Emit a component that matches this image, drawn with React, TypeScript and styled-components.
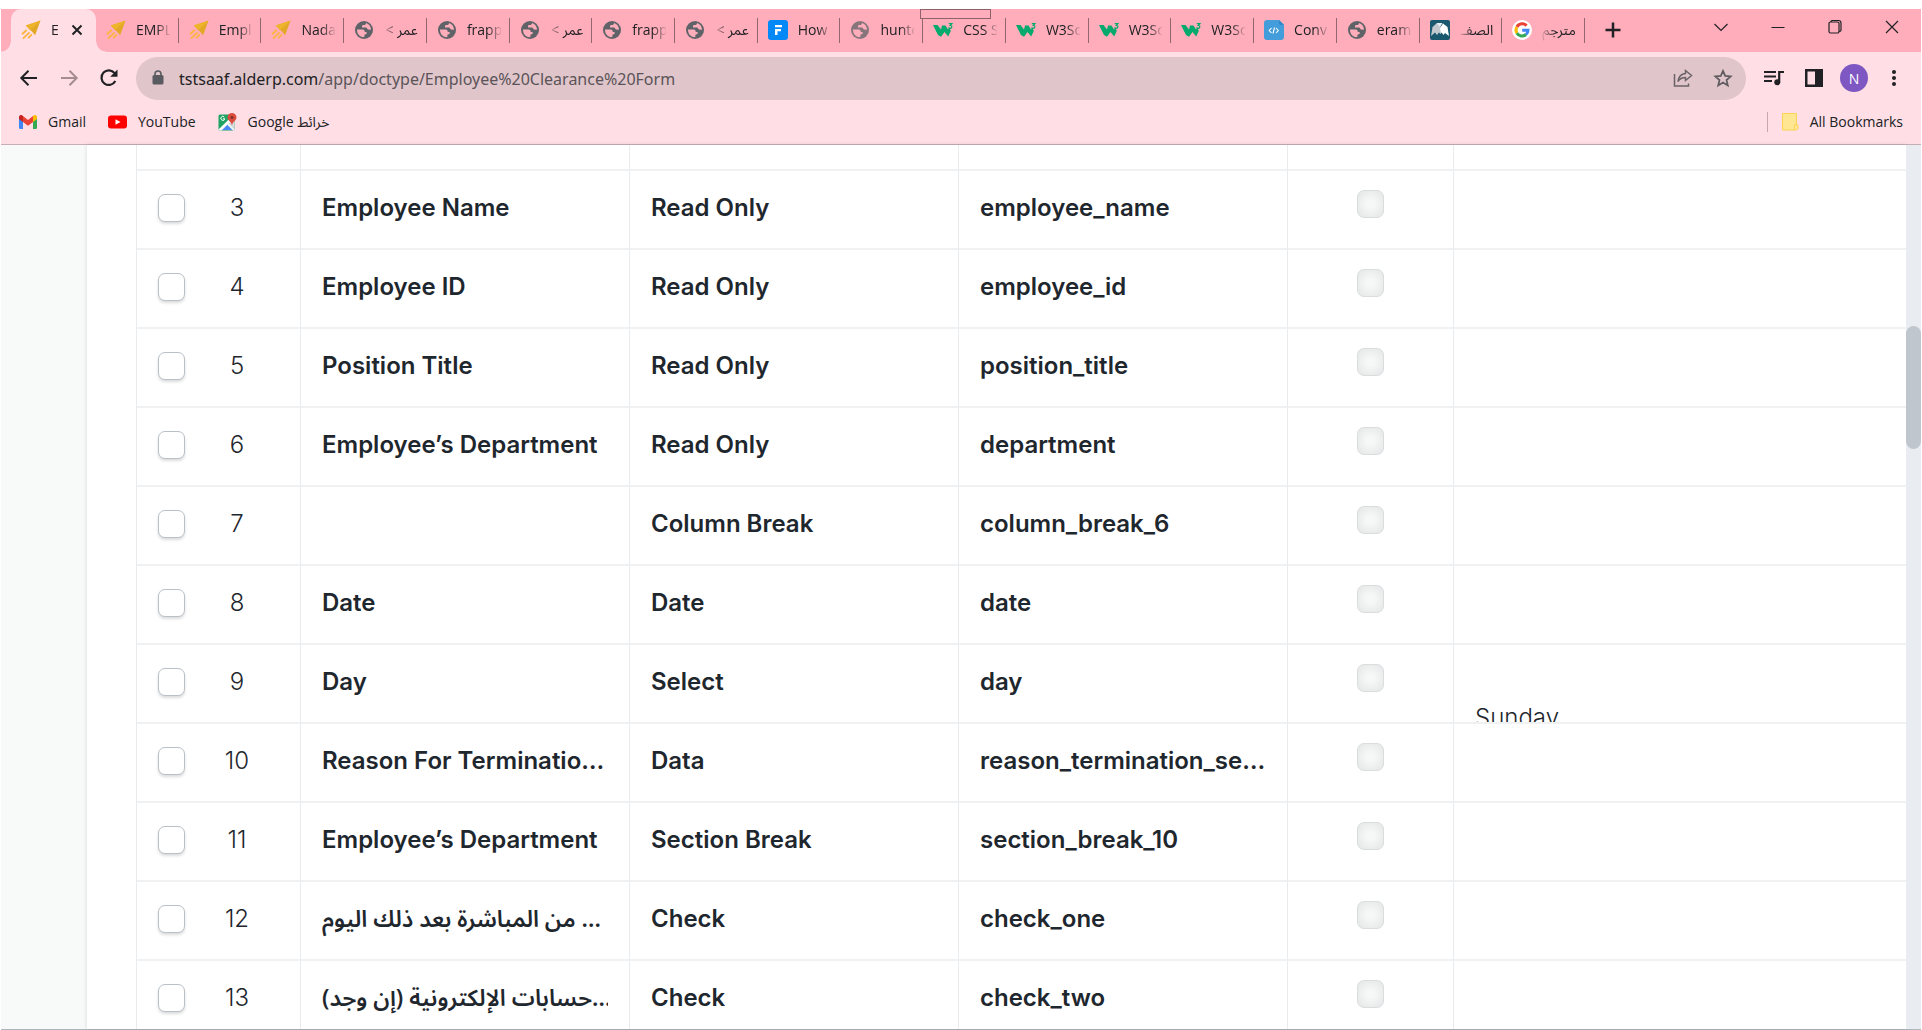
import React from "react";
import styled, { createGlobalStyle, css } from "styled-components";

const GlobalStyle = createGlobalStyle`
  *, *::before, *::after { box-sizing: border-box; }
  html, body { margin: 0; background: #fff; }
  button { border: 0; padding: 0; background: none; color: inherit; font: inherit; }
  svg { display: block; flex: none; }
`;

const uiFont = `"Open Sans", "Noto Sans", "Noto Sans Arabic", "DejaVu Sans", sans-serif`;
const pink = "#ffadbb";
const blush = "#ffdfe5";

/* ---------- window ---------- */

const Window = styled.div`
  display: flex;
  flex-direction: column;
  height: 100vh;
  padding: 9px 1px 0;
  overflow: hidden;
  font-family: ${uiFont};
  color: #202124;
`;

/* ---------- tab strip ---------- */

const TabStrip = styled.header`
  display: flex;
  flex: none;
  height: 43px;
  padding-left: 10px;
  background: ${pink};
`;

const Tabs = styled.nav`
  display: flex;
  flex: 1;
  min-width: 0;
`;

const TabBox = styled.div<{ $active?: boolean }>`
  position: relative;
  display: flex;
  align-items: center;
  padding: 0 9px 2px 10px;
  min-width: 0;
  flex: 1 1 0;
  &::after {
    content: "";
    position: absolute;
    right: 0;
    top: 9px;
    width: 1px;
    height: 25px;
    background: #94666f;
  }
  ${(p) =>
    p.$active &&
    css`
      flex: none;
      width: 85px;
      border-radius: 10px 10px 0 0;
      background: ${blush};
      &::before,
      &::after {
        content: "";
        position: absolute;
        top: auto;
        bottom: 0;
        width: 10px;
        height: 10px;
      }
      &::before {
        left: -10px;
        background: radial-gradient(circle at 0 0, ${pink} 9px, ${blush} 10px);
      }
      &::after {
        right: -10px;
        background: radial-gradient(circle at 100% 0, ${pink} 9px, ${blush} 10px);
      }
    `}
`;

const TabButton = styled.button`
  display: flex;
  align-items: center;
  gap: 10px;
  flex: 1;
  min-width: 0;
  height: 100%;
`;

const TabTitle = styled.span<{ $rtl?: boolean }>`
  flex: 1;
  min-width: 0;
  overflow: hidden;
  white-space: nowrap;
  font-size: 14px;
  line-height: 24px;
  text-align: start;
  mask-image: linear-gradient(
    ${(p) => (p.$rtl ? "to left" : "to right")},
    #000 60%,
    rgba(0, 0, 0, 0.1) 100%
  );
`;

const HoverOutline = styled.span`
  position: absolute;
  top: 0;
  left: -3px;
  z-index: 1;
  width: 71px;
  height: 10px;
  border: 1px solid #8f616b;
`;

const StripActions = styled.div`
  display: flex;
  flex: none;
  width: 336px;
`;

const IconButton = styled.button<{ $w: number }>`
  display: flex;
  align-items: center;
  justify-content: center;
  flex: none;
  width: ${(p) => p.$w}px;
  height: 100%;
`;

const NewTab = styled(IconButton)`
  padding-bottom: 2px;
`;

const WindowControls = styled.div`
  display: flex;
  height: 36px;
  margin-left: auto;
  padding-right: 1px;
`;

/* ---------- toolbar ---------- */

const Toolbar = styled.div`
  display: flex;
  flex: none;
  align-items: center;
  height: 52px;
  padding: 0 7px 0 8px;
  background: ${blush};
`;

const ToolButton = styled(IconButton)`
  height: 40px;
`;

const Omnibox = styled.form`
  display: flex;
  flex: 1;
  align-items: center;
  height: 43px;
  margin-left: 7px;
  padding: 0 3px 0 16px;
  gap: 15px;
  border-radius: 22px;
  background: #e0c5ca;
  color: #5a5458;
`;

const Address = styled.div`
  flex: 1;
  padding-top: 1px;
  font-family: "Noto Sans", sans-serif;
  font-size: 16px;
  line-height: 24px;
  white-space: nowrap;
  b {
    font-weight: 400;
    color: #202124;
  }
`;

const PillActions = styled.div`
  display: flex;
`;

const Extras = styled.div`
  display: flex;
  align-items: center;
  margin-left: 8px;
`;

const Avatar = styled.span`
  display: flex;
  align-items: center;
  justify-content: center;
  width: 28px;
  height: 28px;
  border-radius: 50%;
  background: #7e57c2;
  color: #fff;
  font-size: 14px;
`;

/* ---------- bookmarks ---------- */

const Bookmarks = styled.nav`
  display: flex;
  flex: none;
  align-items: center;
  gap: 22px;
  height: 41px;
  padding: 0 18px 5px;
  border-bottom: 1px solid #c7adb4;
  background: ${blush};
`;

const Bookmark = styled.a<{ $end?: boolean }>`
  display: flex;
  align-items: center;
  gap: 11px;
  color: #202124;
  font-size: 14px;
  line-height: 20px;
  text-decoration: none;
  white-space: nowrap;
  ${(p) =>
    p.$end &&
    css`
      margin-left: auto;
      padding-left: 14px;
      border-left: 1px solid #c7a6ad;
    `}
`;

/* ---------- page ---------- */

const Page = styled.main`
  display: flex;
  flex: 1;
  min-height: 0;
  padding-left: 86px;
  border-bottom: 1px solid #b0b5ba;
  background: #f8faf9;
  font-family: Inter, "Noto Sans Arabic", "DejaVu Sans", sans-serif;
`;

const Card = styled.section`
  flex: 1;
  min-width: 0;
  padding-left: 49px;
  overflow: hidden;
  background: #fff;
  box-shadow: 0 0 4px rgba(17, 43, 66, 0.16);
`;

const Grid = styled.table`
  width: 100%;
  table-layout: fixed;
  border-spacing: 0;
  border-left: 1px solid #e8ecef;
  color: #1f272e;
  font-size: 24px;
  line-height: 36px;
`;

const Col = styled.col<{ $w?: number }>`
  width: ${(p) => (p.$w ? `${p.$w}px` : "auto")};
`;

const Row = styled.tr<{ $h: number }>`
  height: ${(p) => p.$h}px;
`;

const Cell = styled.td<{ $strong?: boolean }>`
  padding: 0 21px;
  border-right: 1px solid #e8ecef;
  border-bottom: 2px solid #eff1f3;
  vertical-align: top;
  font-weight: ${(p) => (p.$strong ? 600 : 300)};
  &:last-child {
    border-right: 0;
  }
`;

const Clip = styled.div`
  height: 77px;
  padding-top: 19px;
  overflow: hidden;
  white-space: pre;
`;

const ArabicLabel = styled.bdi`
  font-family: "Noto Sans Arabic", sans-serif;
  font-size: 23px;
`;

const Selector = styled.label`
  display: flex;
  align-items: flex-start;
  gap: 40px;
  padding-top: 19px;
`;

const Index = styled.span`
  width: 24px;
  display: flex;
  justify-content: center;
`;

const Check = styled.input`
  appearance: none;
  flex: none;
  width: 27px;
  height: 28px;
  margin: 4px 0 0;
  border: 1px solid #b9c0c7;
  border-radius: 7px;
  background: #fff;
  box-shadow: 0 2px 3px rgba(0, 0, 0, 0.14);
  &:disabled {
    display: block;
    margin: 19px auto 0;
    border-color: #dadde0;
    background: radial-gradient(circle, #f6f8f7 20%, #e4e6e6 100%);
    box-shadow: none;
  }
`;

const ScrollTrack = styled.div`
  display: grid;
  grid-template-rows: 181fr 123fr 580fr;
  flex: none;
  width: 15px;
  background: #e9edf1;
`;

const ScrollThumb = styled.div`
  grid-row: 2;
  border-radius: 8px;
  background: #c0c6cd;
`;

/* ---------- icons ---------- */

const Plane = () => (
  <svg width="20" height="20" viewBox="0 0 21 21">
    <path d="M20.500 0.500 5 5.800l4.500 4.700 2 1.500 3.300 4z" fill="#e3a826" />
    <path d="M20.500 0.500 5 5.800l4.500 4.700z" fill="#eeb42c" />
    <path d="M6 10.500 1 15M9 13 2 19.500M11.500 15 7.500 19" stroke="#fbb540" strokeWidth="1.900" fill="none" />
  </svg>
);

const Globe = ({ dim }: { dim?: boolean }) => (
  <svg width="20" height="20" viewBox="0 0 20 20" opacity={dim ? 0.75 : 1}>
    <circle cx="10" cy="10" r="9" fill="#5f6368" />
    <path
      d="M3 9.500h5.500c1.600 0 2 .8 2.300 2.500h1.800v2c-1.800 0-2.300.7-2.300 2v1.300C6 17.200 2.800 14 3 9.500zM12 3c0 1.400-.8 2-2.400 2-.9 0-1.600.5-1.600 1.300v1.300h4c1 0 1 1.500 2 1.800l3 .4C17 6.500 15 3.800 12 3z"
      fill={pink}
    />
  </svg>
);

const Frappe = () => (
  <svg width="20" height="20" viewBox="0 0 20 20">
    <rect width="20" height="20" rx="3" fill="#0289f7" />
    <path d="M7 5h7v2.200H7zM7 9h6v2.200H9.500V15H7z" fill="#fff" />
  </svg>
);

const W3 = () => (
  <svg width="20" height="20" viewBox="0 0 20 20">
    <path d="M0 5h4.500l3.500 4.500L9 5.500h3.500l2.500 4 1.300-2.200 1.500 3.700-2.600 5.500L11.500 12 8 16.800 5 15z" fill="#04aa6d" />
    <path d="M15.800 3.700h3l-1.500 1.800c2.200 0 2 2.800-.3 2.800-.8 0-1.300-.3-1.500-.7" fill="none" stroke="#04aa6d" strokeWidth="1.200" />
  </svg>
);

const Code = () => (
  <svg width="20" height="20" viewBox="0 0 20 20">
    <path d="M3 0h12l5 5v12a3 3 0 0 1-3 3H3a3 3 0 0 1-3-3V3a3 3 0 0 1 3-3z" fill="#439ddb" />
    <path d="M15 0v3a2 2 0 0 0 2 2h3z" fill="#2d86c9" />
    <path d="M7.500 8 5.200 10.500l2.300 2.500M12 8l2.300 2.500-2.300 2.500M10.500 7.500 9 13.500" fill="none" stroke="#fff" strokeWidth="1.100" />
  </svg>
);

const Mountain = () => (
  <svg width="20" height="20" viewBox="0 0 20 20">
    <rect width="20" height="20" rx="2" fill="#19586f" />
    <path d="M1 16 2.500 7 7 3l3.500 3.500V14L9 12.500 7 15l-2-2.500z" fill="#c3c8cf" />
    <path d="M6.500 3h6L10 7z" fill="#e9eef2" />
    <path d="M10 8 13 3.500 17.500 7 19 16l-4-3-1.500 2-2-2.500-1 1.500z" fill="#fff" />
  </svg>
);

const Google = () => (
  <svg width="20" height="20" viewBox="0 0 20 20">
    <circle cx="10" cy="10" r="10" fill="#fff" />
    <g fill="none" strokeWidth="3">
      <path d="M14.600 5.800A6 6 0 0 0 4.900 6.900" stroke="#ea4335" />
      <path d="M4.900 6.900a6 6 0 0 0 0 6.200" stroke="#fbbc05" />
      <path d="M4.900 13.100a6 6 0 0 0 9.100 1.400" stroke="#34a853" />
      <path d="M14 14.500A6 6 0 0 0 16 10.200H10.200" stroke="#4285f4" />
    </g>
  </svg>
);

const Line = ({ d, size = 20, w = 2, color = "#202124" }: { d: string; size?: number; w?: number; color?: string }) => (
  <svg width={size} height={size} viewBox="0 0 20 20" fill="none" stroke={color} strokeWidth={w}>
    <path d={d} />
  </svg>
);

const Lock = () => (
  <svg width="12" height="16" viewBox="0 0 12 16">
    <rect x="0.500" y="5" width="11" height="9.500" rx="1.500" fill="#5a5b60" />
    <path d="M3 6V4a3 3 0 0 1 6 0v2" fill="none" stroke="#5a5b60" strokeWidth="1.600" />
  </svg>
);

const Reload = () => (
  <svg width="20" height="20" viewBox="0 0 20 20">
    <path d="M16.300 13A7.300 7.300 0 1 1 15.600 5.200" fill="none" stroke="#202124" strokeWidth="2.200" />
    <path d="M18.500 1.500v7.300h-7.300z" fill="#202124" />
  </svg>
);

const Music = () => (
  <svg width="22" height="20" viewBox="0 0 22 20">
    <path d="M1 4h12M1 8.500h12M1 13h8" stroke="#202124" strokeWidth="2" />
    <path d="M16.200 14V4H21" stroke="#202124" strokeWidth="2.200" fill="none" />
    <circle cx="14.300" cy="14.300" r="3" fill="#202124" />
  </svg>
);

const SidePanel = () => (
  <svg width="20" height="20" viewBox="0 0 20 20">
    <path d="M1 1h18v18H1zM3.500 3.500v13H11v-13z" fill="#202124" fillRule="evenodd" />
  </svg>
);

const Dots = () => (
  <svg width="6" height="18" viewBox="0 0 6 18" fill="#202124">
    <circle cx="3" cy="3" r="2" />
    <circle cx="3" cy="9" r="2" />
    <circle cx="3" cy="15" r="2" />
  </svg>
);

const Gmail = () => (
  <svg width="18" height="14" viewBox="0 0 18 14">
    <path d="M0 2v10.500c0 .8.500 1.500 1.300 1.500H4V6z" fill="#4285f4" />
    <path d="M14 6v8h2.700c.8 0 1.300-.7 1.300-1.500V2z" fill="#34a853" />
    <path d="M14 1v6l4-3V2c0-1.800-2-2.500-3.300-1.500z" fill="#fbbc04" />
    <path d="M4 7V1l5 4 5-4v6l-5 3.800z" fill="#ea4335" />
    <path d="M0 2v2l4 3V1L3.300.5C2-.5 0 .2 0 2z" fill="#c5221f" />
  </svg>
);

const YouTube = () => (
  <svg width="19" height="14" viewBox="0 0 19 14">
    <rect width="19" height="13" y="0.500" rx="3" fill="#f00" />
    <path d="M7.500 4.300v5.400L12.500 7z" fill="#fff" />
  </svg>
);

const Maps = () => (
  <svg width="19" height="18" viewBox="0 0 19 18">
    <rect x="0.500" y="1.500" width="16" height="16" rx="1.500" fill="#1ea362" />
    <path d="M1 17 9 9l8 8z" fill="#4a89f3" />
    <path d="M16.500 3v13L10 9.500z" fill="#dadce0" />
    <path d="M.5 16.500 12 5.200l2 2L3.500 17.500H2z" fill="#fff" />
    <path d="M9.500 9 8 10.500l7 7h1.500v-1.500z" fill="#f5f5f5" />
    <path d="M14 0a4.500 4.500 0 0 1 4.500 4.500C18.500 7.500 14.500 8.500 14 12.500 13.500 8.500 9.500 7.500 9.500 4.500A4.500 4.500 0 0 1 14 0z" fill="#dd4b3e" />
    <circle cx="14" cy="4.500" r="1.600" fill="#822f2b" />
    <path d="M6.300 4a2 2 0 1 0 .5 1.800H5" fill="none" stroke="#fff" />
  </svg>
);

const Folder = () => (
  <svg width="17" height="19" viewBox="0 0 17 19">
    <path d="M.5 1.500h14V13h1.500v3.500L14.500 18H.5z" fill="#ffe693" stroke="#fcd354" />
    <path d="M12.500 18v-5.500h2" fill="none" stroke="#fcd354" />
  </svg>
);

const Share = () => (
  <svg width="20" height="20" viewBox="0 0 20 20" fill="none" stroke="#696367" strokeWidth="1.500">
    <path d="M1.500 6v12h14v-2.500" />
    <path d="M12.500 2.500 18.500 7.500l-6 5V9.500C9 9.500 6.500 11 5 13.500 5.500 9 8 6 12.500 5.500z" />
  </svg>
);

const Star = () => (
  <svg width="20" height="20" viewBox="0 0 20 20" fill="none" stroke="#5f5b5f" strokeWidth="1.700">
    <path d="m10 2.800 2.200 5.100 5.500.5-4.200 3.600 1.300 5.400L10 14.500l-4.800 2.900 1.300-5.400L2.300 8.400l5.500-.5z" />
  </svg>
);

/* ---------- data ---------- */

type TabItem = { title: string; icon: React.ReactNode; rtl?: boolean; outlined?: boolean };

const tabs: TabItem[] = [
  { title: "EMPL", icon: <Plane /> },
  { title: "Empl", icon: <Plane /> },
  { title: "Nada", icon: <Plane /> },
  { title: "عمر >", icon: <Globe />, rtl: true },
  { title: "frapp", icon: <Globe /> },
  { title: "عمر >", icon: <Globe />, rtl: true },
  { title: "frapp", icon: <Globe /> },
  { title: "عمر >", icon: <Globe />, rtl: true },
  { title: "How", icon: <Frappe /> },
  { title: "hunte", icon: <Globe dim /> },
  { title: "CSS S", icon: <W3 />, outlined: true },
  { title: "W3Sc", icon: <W3 /> },
  { title: "W3Sc", icon: <W3 /> },
  { title: "W3Sc", icon: <W3 /> },
  { title: "Conv", icon: <Code /> },
  { title: "eram", icon: <Globe /> },
  { title: "الصف", icon: <Mountain />, rtl: true },
  { title: "مترجم", icon: <Google />, rtl: true },
];

type Field = { no: number; label: string; type: string; name: string; options?: string; rtl?: boolean };

const fields: Field[] = [
  { no: 3, label: "Employee Name", type: "Read Only", name: "employee_name" },
  { no: 4, label: "Employee ID", type: "Read Only", name: "employee_id" },
  { no: 5, label: "Position Title", type: "Read Only", name: "position_title" },
  { no: 6, label: "Employee’s Department", type: "Read Only", name: "department" },
  { no: 7, label: "", type: "Column Break", name: "column_break_6" },
  { no: 8, label: "Date", type: "Date", name: "date" },
  { no: 9, label: "Day", type: "Select", name: "day", options: "\nSunday" },
  { no: 10, label: "Reason For Terminatio…", type: "Data", name: "reason_termination_se…" },
  { no: 11, label: "Employee’s Department", type: "Section Break", name: "section_break_10" },
  { no: 12, label: "... من المباشرة بعد ذلك اليوم", type: "Check", name: "check_one", rtl: true },
  { no: 13, label: "...حسابات الإلكترونية (إن وجد)", type: "Check", name: "check_two", rtl: true },
];

const columns: (number | undefined)[] = [164, 329, 329, 329, 166, undefined];

/* ---------- app ---------- */

export default function App() {
  return (
    <Window>
      <GlobalStyle />
      <TabStrip>
        <Tabs>
          <TabBox $active>
            <TabButton>
              <Plane />
              <TabTitle>E</TabTitle>
            </TabButton>
            <IconButton $w={20} aria-label="Close tab">
              <Line d="M5.500 5.500l9 9M14.500 5.500l-9 9" />
            </IconButton>
          </TabBox>
          {tabs.map((tab, i) => (
            <TabBox key={i}>
              {tab.outlined && <HoverOutline />}
              <TabButton>
                {tab.icon}
                <TabTitle $rtl={tab.rtl} dir={tab.rtl ? "rtl" : "ltr"}>
                  {tab.title}
                </TabTitle>
              </TabButton>
            </TabBox>
          ))}
        </Tabs>
        <StripActions>
          <NewTab $w={55} aria-label="New tab">
            <Line d="M10 2.500v15M2.500 10h15" w={2.5} />
          </NewTab>
          <WindowControls>
            <IconButton $w={57} aria-label="Search tabs">
              <Line d="M3.500 7 10 13.500 16.500 7" w={1.2} />
            </IconButton>
            <IconButton $w={57} aria-label="Minimize">
              <Line d="M3.500 10.500h13" w={1} />
            </IconButton>
            <IconButton $w={57} aria-label="Restore">
              <Line
                d="M4 6.500a1.500 1.500 0 0 1 1.500-1.500h7A1.500 1.500 0 0 1 14 6.500v8a1.500 1.500 0 0 1-1.500 1.500h-7A1.500 1.500 0 0 1 4 14.500zM6 4.500C6 4 6.500 3.500 7 3.500h6.500a2.500 2.500 0 0 1 2.500 2.500v7c0 .8-.5 1.500-1.500 1.500"
                w={1.2}
              />
            </IconButton>
            <IconButton $w={57} aria-label="Close">
              <Line d="M4 4l12 12M16 4 4 16" w={1.2} />
            </IconButton>
          </WindowControls>
        </StripActions>
      </TabStrip>

      <Toolbar>
        <ToolButton $w={40} aria-label="Back" type="button">
          <Line d="M18 10H2.500M9.500 2.800 2.300 10l7.200 7.200" />
        </ToolButton>
        <ToolButton $w={40} aria-label="Forward" type="button">
          <Line d="M2 10h15.500M10.500 2.800 17.700 10l-7.200 7.200" color="#a58c92" />
        </ToolButton>
        <ToolButton $w={40} aria-label="Reload" type="button">
          <Reload />
        </ToolButton>
        <Omnibox>
          <Lock />
          <Address>
            <b>tstsaaf.alderp.com</b>/app/doctype/Employee%20Clearance%20Form
          </Address>
          <PillActions>
            <ToolButton $w={40} aria-label="Share" type="button">
              <Share />
            </ToolButton>
            <ToolButton $w={40} aria-label="Bookmark this page" type="button">
              <Star />
            </ToolButton>
          </PillActions>
        </Omnibox>
        <Extras>
          <ToolButton $w={40} aria-label="Media" type="button">
            <Music />
          </ToolButton>
          <ToolButton $w={40} aria-label="Side panel" type="button">
            <SidePanel />
          </ToolButton>
          <ToolButton $w={40} aria-label="Profile" type="button">
            <Avatar>N</Avatar>
          </ToolButton>
          <ToolButton $w={40} aria-label="Menu" type="button">
            <Dots />
          </ToolButton>
        </Extras>
      </Toolbar>

      <Bookmarks>
        <Bookmark href="#gmail">
          <Gmail />
          Gmail
        </Bookmark>
        <Bookmark href="#youtube">
          <YouTube />
          YouTube
        </Bookmark>
        <Bookmark href="#maps">
          <Maps />
          Google خرائط
        </Bookmark>
        <Bookmark href="#all" $end>
          <Folder />
          All Bookmarks
        </Bookmark>
      </Bookmarks>

      <Page>
        <Card>
          <Grid>
            <colgroup>
              {columns.map((w, i) => (
                <Col key={i} $w={w} />
              ))}
            </colgroup>
            <tbody>
              <Row $h={26}>
                {columns.map((_, i) => (
                  <Cell key={i} />
                ))}
              </Row>
              {fields.map((f) => (
                <Row key={f.no} $h={79}>
                  <Cell>
                    <Selector>
                      <Check type="checkbox" />
                      <Index>{f.no}</Index>
                    </Selector>
                  </Cell>
                  <Cell $strong>
                    <Clip>{f.rtl ? <ArabicLabel dir="rtl">{f.label}</ArabicLabel> : f.label}</Clip>
                  </Cell>
                  <Cell $strong>
                    <Clip>{f.type}</Clip>
                  </Cell>
                  <Cell $strong>
                    <Clip>{f.name}</Clip>
                  </Cell>
                  <Cell>
                    <Check type="checkbox" disabled aria-label={`${f.name} mandatory`} />
                  </Cell>
                  <Cell>
                    <Clip>{f.options}</Clip>
                  </Cell>
                </Row>
              ))}
            </tbody>
          </Grid>
        </Card>
        <ScrollTrack>
          <ScrollThumb />
        </ScrollTrack>
      </Page>
    </Window>
  );
}
